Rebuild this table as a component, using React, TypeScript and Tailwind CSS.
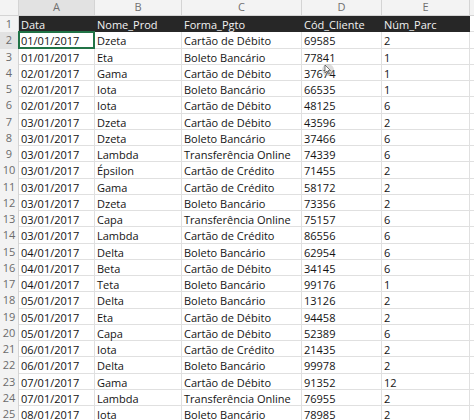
const cols = [
  { key: 'A', w: 'w-[76px]' },
  { key: 'B', w: 'w-[87px]' },
  { key: 'C', w: 'w-[120px]' },
  { key: 'D', w: 'w-[80px]' },
  { key: 'E', w: 'w-[88px]' },
]

const header = ['Data', 'Nome_Prod', 'Forma_Pgto', 'Cód_Cliente', 'Núm_Parc']

const rows: string[][] = [
  ['01/01/2017', 'Dzeta', 'Cartão de Débito', '69585', '2'],
  ['01/01/2017', 'Eta', 'Boleto Bancário', '77841', '1'],
  ['02/01/2017', 'Gama', 'Cartão de Débito', '37674', '1'],
  ['02/01/2017', 'Iota', 'Boleto Bancário', '66535', '1'],
  ['02/01/2017', 'Iota', 'Cartão de Débito', '48125', '6'],
  ['03/01/2017', 'Dzeta', 'Cartão de Débito', '43596', '2'],
  ['03/01/2017', 'Dzeta', 'Boleto Bancário', '37466', '6'],
  ['03/01/2017', 'Lambda', 'Transferência Online', '74339', '6'],
  ['03/01/2017', 'Épsilon', 'Cartão de Crédito', '71455', '2'],
  ['03/01/2017', 'Gama', 'Cartão de Crédito', '58172', '2'],
  ['03/01/2017', 'Dzeta', 'Boleto Bancário', '73356', '2'],
  ['03/01/2017', 'Capa', 'Transferência Online', '75157', '6'],
  ['03/01/2017', 'Lambda', 'Cartão de Crédito', '86556', '6'],
  ['04/01/2017', 'Delta', 'Boleto Bancário', '62954', '6'],
  ['04/01/2017', 'Beta', 'Cartão de Débito', '34145', '6'],
  ['04/01/2017', 'Teta', 'Boleto Bancário', '99176', '1'],
  ['05/01/2017', 'Delta', 'Boleto Bancário', '13126', '2'],
  ['05/01/2017', 'Eta', 'Cartão de Débito', '94458', '2'],
  ['05/01/2017', 'Capa', 'Cartão de Débito', '52389', '6'],
  ['06/01/2017', 'Iota', 'Cartão de Crédito', '21435', '2'],
  ['06/01/2017', 'Delta', 'Boleto Bancário', '99978', '2'],
  ['07/01/2017', 'Gama', 'Cartão de Débito', '91352', '12'],
  ['07/01/2017', 'Lambda', 'Transferência Online', '76955', '2'],
  ['08/01/2017', 'Iota', 'Boleto Bancário', '78985', '2'],
]

// sheet rows are ~16.25px tall in the capture, so mix 16 and 17px rows
function rowH(k: number) {
  const h = Math.round((k + 1) * 16.25) - Math.round(k * 16.25)
  return h === 17 ? 'h-[17px]' : 'h-[16px]'
}

function RowNum({ n, active }: { n: number; active?: boolean }) {
  return (
    <div
      className={`w-[19px] shrink-0 h-full flex items-center justify-center border-r border-[#d4d4d4] text-[11px] text-[#6b6b6b] ${
        active ? 'bg-[#e2e2e2]' : 'bg-[#f3f3f3]'
      }`}
    >
      {n}
    </div>
  )
}

export default function App() {
  return (
    <div
      className="w-[474px] h-[420px] overflow-hidden bg-white relative"
      style={{ fontFamily: '"Open Sans", "Noto Sans", sans-serif' }}
    >
      {/* column letters */}
      <div className="flex h-[16px] bg-[#f3f3f3] border-b border-[#d4d4d4]">
        <div className="w-[19px] shrink-0 border-r border-[#d4d4d4]" />
        {cols.map((c, i) => (
          <div
            key={c.key}
            className={`${c.w} shrink-0 flex items-center justify-center text-[11px] text-[#707070] border-r border-[#d4d4d4] ${
              i === 0 ? 'bg-[#e2e2e2]' : ''
            }`}
          >
            {c.key}
          </div>
        ))}
        <div className="flex-1" />
      </div>

      {/* header row */}
      <div className={`flex ${rowH(0)}`}>
        <RowNum n={1} />
        {header.map((h, i) => (
          <div
            key={h}
            className={`${cols[i].w} shrink-0 bg-[#272727] text-[#f2f2f2] text-[11px] leading-[17px] px-[2px] whitespace-nowrap`}
          >
            {h}
          </div>
        ))}
        <div className="flex-1 border-b border-[#e0e0e0]" />
      </div>

      {rows.map((r, ri) => (
        <div key={ri} className={`flex ${rowH(ri + 1)}`}>
          <RowNum n={ri + 2} active={ri === 0} />
          {r.map((v, ci) => (
            <div
              key={ci}
              className={`${cols[ci].w} shrink-0 text-[11px] leading-[17px] text-[#141414] px-[2px] whitespace-nowrap border-r border-b border-[#e0e0e0] relative`}
            >
              {v}
              {ri === 0 && ci === 0 && (
                <div className="absolute -left-[1px] -top-[1px] -right-[1px] -bottom-[1px] border-2 border-[#217346]" />
              )}
            </div>
          ))}
          <div className="flex-1 border-b border-[#e0e0e0]" />
        </div>
      ))}

      {/* busy cursor over D4 */}
      <svg className="absolute left-[321px] top-[63px]" width="14" height="14" viewBox="0 0 14 14">
        <circle cx="7" cy="7" r="6" fill="#9a9a9a" opacity="0.35" />
        <path d="M4 2 L4 10 L6 8 L7.5 11 L8.5 10.5 L7 7.6 L9.6 7.6 Z" fill="#fff" stroke="#444" strokeWidth="0.7" />
      </svg>
    </div>
  )
}
